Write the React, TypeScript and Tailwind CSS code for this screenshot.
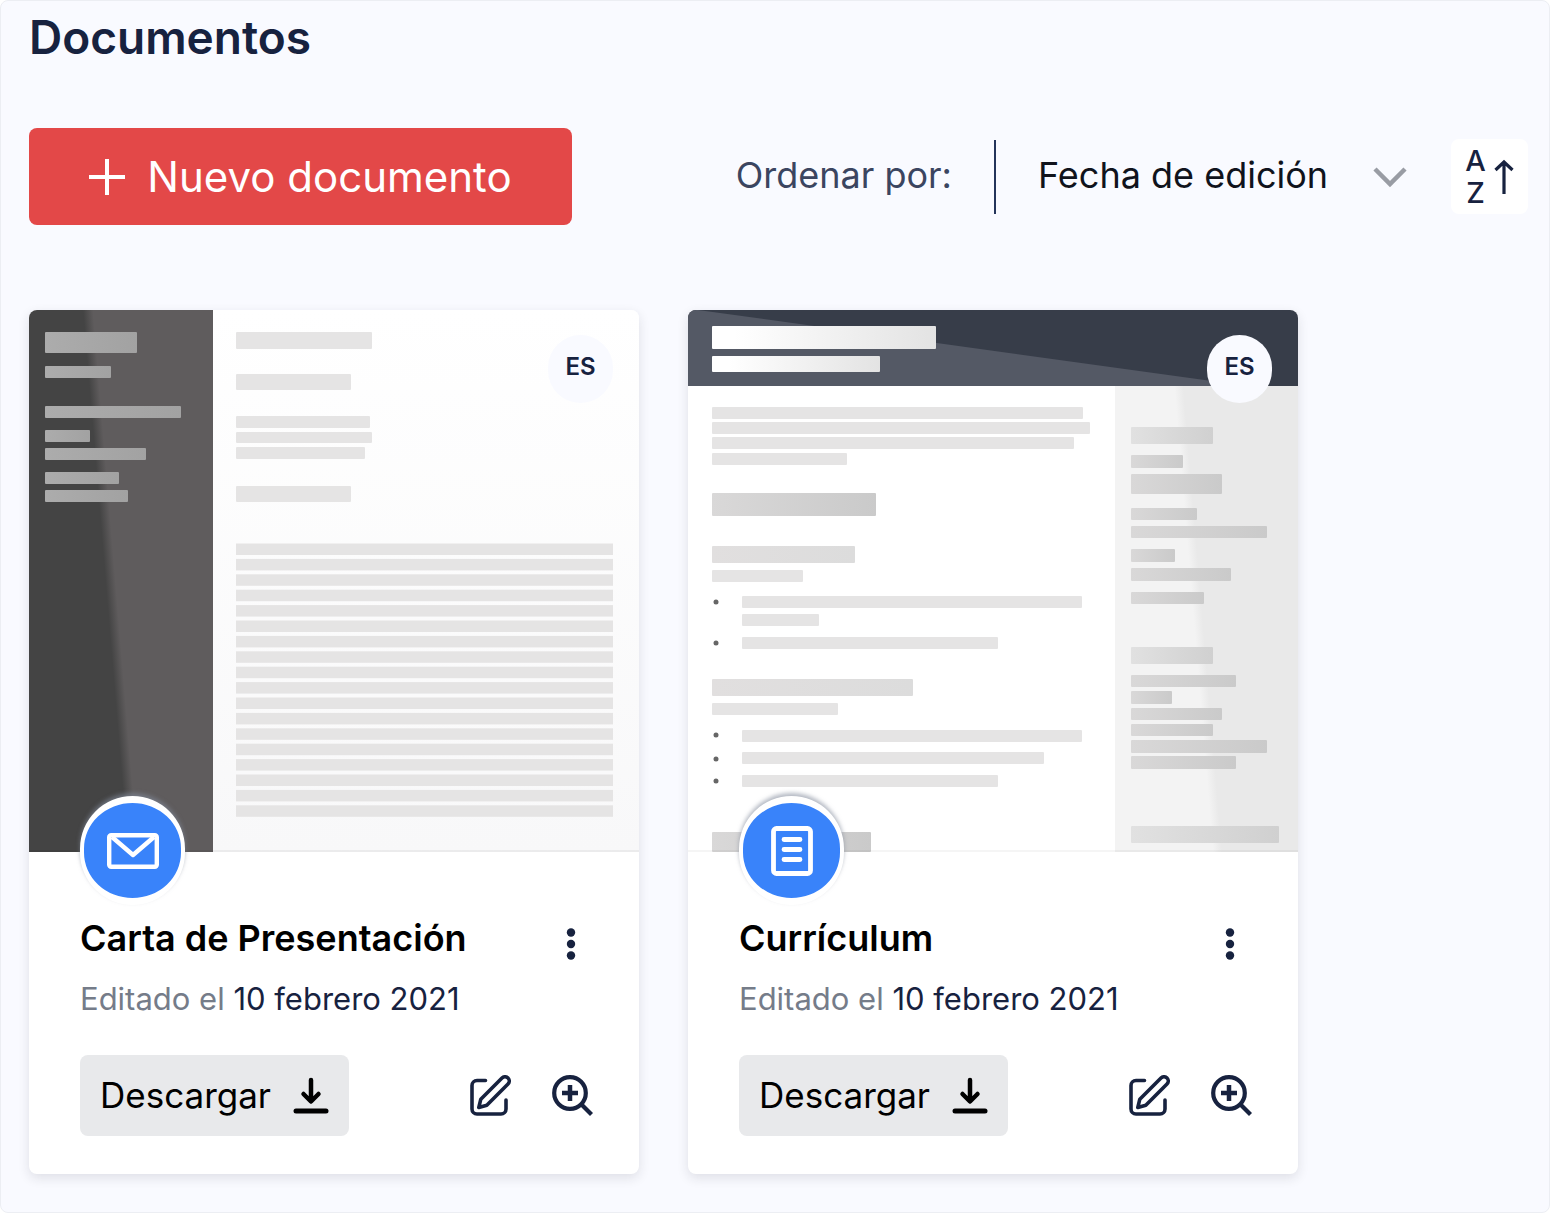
import { useState } from 'react';
import type { ReactNode } from 'react';

type Bar = [x: number, y: number, width: number, height: number];

interface DocumentCardProps {
    title: string;
    date: string;
    language: string;
    preview: ReactNode;
    icon: ReactNode;
}

// Placeholder bars of the two thumbnails, in the 610x542 preview box
const letterSidebarBars: Bar[] = [
    [16, 22, 92, 21],
    [16, 56, 66, 12],
    [16, 96, 136, 12],
    [16, 120, 45, 12],
    [16, 138, 101, 12],
    [16, 162, 74, 12],
    [16, 180, 83, 12],
];

const letterBars: Bar[] = [
    [207, 22, 136, 17],
    [207, 64, 115, 16],
    [207, 106, 134, 12],
    [207, 122, 136, 11],
    [207, 137, 129, 12],
    [207, 176, 115, 16],
];

const resumeTextBars: Bar[] = [
    [24, 97, 371, 12],
    [24, 112, 378, 12],
    [24, 127, 362, 12],
    [24, 143, 135, 12],
    [24, 260, 91, 12],
    [54, 286, 340, 12],
    [54, 304, 77, 12],
    [54, 327, 256, 12],
    [24, 393, 126, 12],
    [54, 420, 340, 12],
    [54, 442, 302, 12],
    [54, 465, 256, 12],
];

const resumeSubtitleBars: Bar[] = [
    [24, 236, 143, 17],
    [24, 369, 201, 17],
];

const resumeTitleBars: Bar[] = [
    [24, 183, 164, 23],
    [24, 522, 159, 20],
];

const resumeSideTitleBars: Bar[] = [
    [443, 117, 82, 17],
    [443, 337, 82, 17],
    [443, 516, 148, 17],
];

const resumeSideBars: Bar[] = [
    [443, 145, 52, 13],
    [443, 164, 91, 20],
    [443, 198, 66, 12],
    [443, 216, 136, 12],
    [443, 239, 44, 13],
    [443, 258, 100, 13],
    [443, 282, 73, 12],
    [443, 365, 105, 12],
    [443, 381, 41, 13],
    [443, 398, 91, 12],
    [443, 414, 82, 12],
    [443, 430, 136, 13],
    [443, 446, 105, 13],
];

const Bars = ({ bars, fill }: { bars: Bar[]; fill: string }) => (
    <g fill={fill}>
        {bars.map(([x, y, width, height]) => (
            <rect key={`${x}-${y}`} x={x} y={y} width={width} height={height} rx="1" />
        ))}
    </g>
);

const LetterPreview = () => (
    <svg viewBox="0 0 610 542" className="block w-full" aria-hidden="true">
        <defs>
            <linearGradient id="letter-page" x1="0" y1="0" x2="0" y2="1">
                <stop offset="0" stopColor="#ffffff" />
                <stop offset="1" stopColor="#f8f8f9" />
            </linearGradient>
            <linearGradient id="letter-side" gradientUnits="userSpaceOnUse" x1="54" y1="0" x2="64" y2="0" gradientTransform="skewX(4.75)">
                <stop offset="0" stopColor="#444444" />
                <stop offset="1" stopColor="#5f5c5d" />
            </linearGradient>
            <linearGradient id="letter-bar">
                <stop offset="0" stopColor="#acacac" />
                <stop offset="1" stopColor="#a2a2a2" />
            </linearGradient>
        </defs>
        <rect width="610" height="542" fill="url(#letter-page)" />
        <rect width="184" height="542" fill="url(#letter-side)" />
        <Bars bars={letterSidebarBars} fill="url(#letter-bar)" />
        <Bars bars={letterBars} fill="#e5e4e4" />
        <g fill="#e5e4e4">
            {Array.from({ length: 18 }, (_, i) => (
                <rect key={i} x="207" y={233.5 + i * 15.4} width="377" height="11.5" />
            ))}
        </g>
        <rect y="540" width="610" height="2" fill="#000000" opacity="0.05" />
    </svg>
);

const ResumePreview = () => (
    <svg viewBox="0 0 610 542" className="block w-full" aria-hidden="true">
        <defs>
            <linearGradient id="resume-side" gradientUnits="userSpaceOnUse" x1="480" y1="0" x2="489" y2="0" gradientTransform="skewX(4.75)">
                <stop offset="0" stopColor="#f3f3f3" />
                <stop offset="1" stopColor="#e9e9e9" />
            </linearGradient>
            <linearGradient id="resume-name">
                <stop offset="0.1" stopColor="#ffffff" />
                <stop offset="1" stopColor="#e3e3e3" />
            </linearGradient>
            <linearGradient id="resume-title">
                <stop offset="0" stopColor="#d9d8d8" />
                <stop offset="1" stopColor="#cacaca" />
            </linearGradient>
            <linearGradient id="resume-subtitle">
                <stop offset="0" stopColor="#e1dfdf" />
                <stop offset="1" stopColor="#dcdcdc" />
            </linearGradient>
            <linearGradient id="resume-side-title">
                <stop offset="0" stopColor="#e1e1e1" />
                <stop offset="1" stopColor="#d0d0d0" />
            </linearGradient>
        </defs>
        <rect width="610" height="542" fill="#ffffff" />
        <rect x="427" y="76" width="183" height="466" fill="url(#resume-side)" />
        <rect width="610" height="76" fill="#373d49" />
        <path d="M0 0H10L560 76H0Z" fill="#545965" />
        <Bars bars={[[24, 16, 224, 23], [24, 46, 168, 16]]} fill="url(#resume-name)" />
        <Bars bars={resumeTextBars} fill="#e5e4e4" />
        <Bars bars={resumeSubtitleBars} fill="url(#resume-subtitle)" />
        <Bars bars={resumeTitleBars} fill="url(#resume-title)" />
        <Bars bars={resumeSideTitleBars} fill="url(#resume-side-title)" />
        <Bars bars={resumeSideBars} fill="url(#resume-title)" />
        {[292, 333, 425, 449, 471].map((y) => (
            <circle key={y} cx="28" cy={y} r="2.5" fill="#666666" />
        ))}
        <rect y="540" width="610" height="2" fill="#000000" opacity="0.04" />
    </svg>
);

const MailIcon = () => (
    <svg width="52" height="36" viewBox="0 0 52 36" fill="none" stroke="currentColor" strokeWidth="4.4" strokeLinejoin="round" aria-hidden="true">
        <rect x="2.2" y="2.2" width="47.6" height="31.6" rx="2" />
        <path d="M5 4L26 22L47 4" />
    </svg>
);

const ResumeIcon = () => (
    <svg width="42" height="50" viewBox="0 0 42 50" fill="none" stroke="currentColor" strokeWidth="4.8" strokeLinecap="round" aria-hidden="true">
        <rect x="2.5" y="2.5" width="37" height="45" rx="3" />
        <path d="M13 13.5H29M13 23.5H29M13 33.5H29" />
    </svg>
);

const PlusIcon = () => (
    <svg width="36" height="36" viewBox="0 0 36 36" stroke="currentColor" strokeWidth="4" aria-hidden="true">
        <path d="M18 0V36M0 18H36" />
    </svg>
);

const DownloadIcon = () => (
    <svg width="36" height="38" viewBox="0 0 36 38" fill="none" stroke="currentColor" strokeWidth="4.5" strokeLinecap="round" strokeLinejoin="round" aria-hidden="true">
        <path d="M18 3V23M10.5 17L18 24.5L25.5 17" />
        <path d="M3 34H33" strokeWidth="5" />
    </svg>
);

const EditIcon = () => (
    <svg width="41" height="41" viewBox="0 0 41 41" fill="none" stroke="currentColor" strokeWidth="3.6" strokeLinecap="round" strokeLinejoin="round" aria-hidden="true">
        <path d="M15.5 5.5H7A5 5 0 0 0 2 10.5V34A5 5 0 0 0 7 39H31A5 5 0 0 0 36 34V25" />
        <path d="M8.8 32.5L10.8 24.2L32 3A3.6 3.6 0 0 1 38 9L16.8 30.2Z" />
    </svg>
);

const ZoomIcon = () => (
    <svg width="41" height="41" viewBox="0 0 41 41" fill="none" stroke="currentColor" strokeWidth="4.2" aria-hidden="true">
        <circle cx="18" cy="18" r="15.8" />
        <path d="M18 10V26M10 18H26" strokeWidth="4.5" />
        <path d="M29.5 29.5L39.5 39.5" />
    </svg>
);

const DocumentCard = ({ title, date, language, preview, icon }: DocumentCardProps) => {
    return (
        <article className="w-[610px] max-w-full rounded-lg bg-white shadow-[0_4px_12px_rgba(30,30,50,0.12)]">
            <div className="relative overflow-hidden rounded-t-lg">
                {preview}
                <span className="absolute top-[25px] right-[26px] flex h-[68px] w-[65px] items-center justify-center rounded-full bg-[#f9faff] pb-1 text-2xl font-semibold text-[#17223f]">
                    {language}
                </span>
            </div>

            <div className="pr-[46px] pb-[38px] pl-[51px]">
                {/* Document type badge, straddles the preview edge */}
                <div className="relative -mt-14 flex h-[109px] w-[105px] items-center justify-center rounded-full border-x-4 border-y-[7px] border-white bg-[#3983fa] text-white shadow-[0_-3px_4px_rgba(130,138,155,0.6)]">
                    {icon}
                </div>

                <div className="mt-[10px] flex items-center justify-between">
                    <h2 className="text-4xl leading-[44px] font-semibold text-black">{title}</h2>
                    <button type="button" aria-label="Más opciones" className="mr-4 pt-3 text-[#17223f]">
                        <svg width="12" height="34" viewBox="0 0 12 34" fill="currentColor" aria-hidden="true">
                            <circle cx="6" cy="5.5" r="4.2" />
                            <circle cx="6" cy="17" r="4.2" />
                            <circle cx="6" cy="28.5" r="4.2" />
                        </svg>
                    </button>
                </div>

                <p className="mt-4 text-[31px] leading-[44px] text-[#17223f]">
                    <span className="text-[#757c89]">Editado el</span> {date}
                </p>

                <div className="mt-[34px] flex items-center justify-between">
                    <button type="button" className="flex h-[81px] items-center gap-[22px] rounded-lg bg-[#e8e9eb] px-5 text-[35px] text-black">
                        Descargar
                        <DownloadIcon />
                    </button>
                    <div className="flex gap-[41px] text-[#17223f]">
                        <button type="button" aria-label="Editar">
                            <EditIcon />
                        </button>
                        <button type="button" aria-label="Ampliar">
                            <ZoomIcon />
                        </button>
                    </div>
                </div>
            </div>
        </article>
    );
};

const App = () => {
    const [order, setOrder] = useState('edited');

    return (
        <main className="min-h-screen rounded-lg border border-[#eceef3] bg-[#f9faff] pt-3 pr-[21px] pb-[38px] pl-7 font-['Inter','Open_Sans',sans-serif] text-[#17223f]">
            <h1 className="text-[46px] leading-[48px] font-semibold">Documentos</h1>

            <div className="mt-[67px] flex flex-wrap items-center justify-between gap-6">
                <button type="button" className="flex h-[97px] w-[543px] max-w-full items-center justify-center gap-[22px] rounded-lg bg-[#e34848] text-[42px] text-white">
                    <PlusIcon />
                    Nuevo documento
                </button>

                <div className="flex items-center">
                    <label htmlFor="order" className="pb-1 text-4xl text-[#3b4560]">
                        Ordenar por:
                    </label>
                    <div className="ml-[42px] h-[74px] w-0.5 bg-[#24345a]" />
                    <div className="relative ml-[42px]">
                        <select
                            id="order"
                            value={order}
                            onChange={(e) => setOrder(e.target.value)}
                            className="w-[369px] appearance-none bg-transparent pb-1 text-4xl text-[#10131c]"
                        >
                            <option value="edited">Fecha de edición</option>
                            <option value="created">Fecha de creación</option>
                            <option value="name">Nombre</option>
                        </select>
                        <svg width="34" height="22" viewBox="0 0 34 22" fill="none" stroke="#999ca4" strokeWidth="4.5" className="pointer-events-none absolute top-1/2 right-0 -translate-y-1/2" aria-hidden="true">
                            <path d="M2 3L17 18L32 3" />
                        </svg>
                    </div>
                    <button type="button" aria-label="Cambiar orden" className="ml-11 flex h-[75px] w-[77px] items-center justify-center gap-2 rounded-lg bg-white">
                        <span className="text-center text-[29px] leading-8 font-medium">
                            A<br />Z
                        </span>
                        <svg width="20" height="36" viewBox="0 0 20 36" fill="none" stroke="currentColor" strokeWidth="3.2" aria-hidden="true">
                            <path d="M10 35V3M1.5 11L10 3L18.5 11" />
                        </svg>
                    </button>
                </div>
            </div>

            <section className="mt-[85px] flex flex-wrap gap-[49px]">
                <DocumentCard
                    title="Carta de Presentación"
                    date="10 febrero 2021"
                    language="ES"
                    preview={<LetterPreview />}
                    icon={<MailIcon />}
                />
                <DocumentCard
                    title="Currículum"
                    date="10 febrero 2021"
                    language="ES"
                    preview={<ResumePreview />}
                    icon={<ResumeIcon />}
                />
            </section>
        </main>
    );
};

export default App;
